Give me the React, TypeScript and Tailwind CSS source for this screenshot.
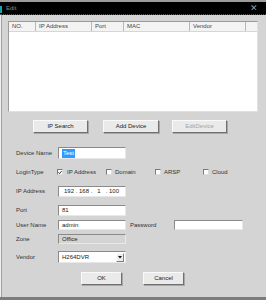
import React from "react";

const font = { fontFamily: '"Liberation Sans", Arial, sans-serif' };

function Btn({ label, w, disabled }: { label: string; w: number; disabled?: boolean }) {
  return (
    <div
      className={`h-[13px] flex items-center justify-center bg-[#eaeaea] border border-t-[#fafafa] border-l-[#fafafa] border-r-[#6f6f6f] border-b-[#6f6f6f] shadow-[1px_1px_0_#a8a8a8] text-[6px] ${disabled ? "text-[#a3a3a3]" : "text-[#222]"}`}
      style={{ width: w }}
    >
      {label}
    </div>
  );
}

function Field({ children, w = 68, h = 11, grey }: { children?: React.ReactNode; w?: number; h?: number; grey?: boolean }) {
  return (
    <div
      className={`flex items-center pl-[3px] border border-t-[#8a8a8a] border-l-[#8a8a8a] border-r-[#e8e8e8] border-b-[#e8e8e8] text-[6px] text-[#222] ${grey ? "bg-[#d4d4d4]" : "bg-white"}`}
      style={{ width: w, height: h }}
    >
      {children}
    </div>
  );
}

function Check({ checked }: { checked?: boolean }) {
  return (
    <div className="w-[6px] h-[6px] bg-white border border-t-[#7a7a7a] border-l-[#7a7a7a] border-r-[#dcdcdc] border-b-[#dcdcdc] flex items-center justify-center">
      {checked && (
        <svg width="5" height="5" viewBox="0 0 5 5">
          <path d="M0.5 2.3 L2 3.8 L4.5 0.8" stroke="#111" strokeWidth="1.1" fill="none" />
        </svg>
      )}
    </div>
  );
}

function Label({ children, w = 42 }: { children: React.ReactNode; w?: number }) {
  return (
    <div className="text-[6px] text-[#333] shrink-0" style={{ width: w }}>
      {children}
    </div>
  );
}

export default function App() {
  const cols = [
    { t: "NO.", w: 27 },
    { t: "IP Address", w: 56 },
    { t: "Port", w: 32 },
    { t: "MAC", w: 66 },
    { t: "Vendor", w: 56 },
  ];
  return (
    <div className="w-[266px] h-[300px] bg-[#d4d4d4] flex flex-col overflow-hidden" style={font}>
      <div className="h-[2px] bg-[#9c9c9c]" />
      <div className="h-[13px] bg-black flex items-center border-b border-dotted border-[#555] relative">
        <div className="w-[2px] h-[7px] bg-[#19a3b0] self-end mb-[1px]" />
        <span className="ml-[4px] text-[6px] text-[#8a8a8a]">Edit</span>
        <span className="ml-auto mr-[8px] text-[9px] leading-none text-[#9a9a9a]">✕</span>
      </div>
      <div className="flex-1 flex border-l border-l-[#efefef]">
        <div className="flex-1 flex flex-col border-l border-l-[#a2a2a2]">
          {/* table */}
          <div className="ml-[6px] mt-[6px] w-[250px] h-[91px] bg-white border border-t-[#9a9a9a] border-l-[#9a9a9a] border-r-[#e0e0e0] border-b-[#e0e0e0] flex flex-col">
            <div className="h-[10px] flex bg-[#f3f3f3] border-b border-[#d6d6d6]">
              {cols.map((c) => (
                <div
                  key={c.t}
                  className="h-full flex items-center pl-[3px] text-[6px] text-[#444] border-r border-[#b8b8b8]"
                  style={{ width: c.w }}
                >
                  {c.t}
                </div>
              ))}
              <div className="flex-1" />
            </div>
          </div>
          {/* buttons */}
          <div className="flex mt-[8px] ml-[31px]">
            <Btn label="IP Search" w={55} />
            <div className="w-[15px]" />
            <Btn label="Add Device" w={56} />
            <div className="w-[13px]" />
            <Btn label="EditDevice" w={55} disabled />
          </div>
          <div className="flex flex-col ml-[14px]">
            <div className="flex items-center mt-[14px] h-[12px]">
              <Label>Device Name</Label>
              <Field h={12}>
                <span className="bg-[#3399ff] text-white px-[1px]">Test</span>
              </Field>
            </div>
            <div className="flex items-center mt-[8px] h-[10px] text-[6px] text-[#333]">
              <Label w={41}>LoginType</Label>
              <Check checked />
              <span className="ml-[4px] w-[39px]">IP Address</span>
              <Check />
              <span className="ml-[3px] w-[40px]">Domain</span>
              <Check />
              <span className="ml-[3px] w-[39px]">ARSP</span>
              <Check />
              <span className="ml-[3px]">Cloud</span>
            </div>
            <div className="flex items-center mt-[9px] h-[11px]">
              <Label>IP Address</Label>
              <Field>
                <span className="ml-[2px] whitespace-pre">192 . 168 .   1   . 100</span>
              </Field>
            </div>
            <div className="flex items-center mt-[8px] h-[11px]">
              <Label>Port</Label>
              <Field>81</Field>
            </div>
            <div className="flex items-center mt-[4px] h-[10px]">
              <Label>User Name</Label>
              <Field h={10}>admin</Field>
              <div className="ml-[4px] w-[44px] text-[6px] text-[#333]">Password</div>
              <Field w={69} h={10} />
            </div>
            <div className="flex items-center mt-[4px] h-[10px]">
              <Label>Zone</Label>
              <Field h={10} grey>
                Office
              </Field>
            </div>
            <div className="flex items-center mt-[7px] h-[12px]">
              <Label>Vendor</Label>
              <div className="w-[68px] h-[12px] flex items-center bg-white border border-t-[#8a8a8a] border-l-[#8a8a8a] border-r-[#e8e8e8] border-b-[#e8e8e8] text-[6px] text-[#222]">
                <span className="pl-[3px] flex-1">H264DVR</span>
                <div className="w-[8px] h-[9px] mr-[1px] bg-[#ececec] border border-t-[#fff] border-l-[#fff] border-r-[#808080] border-b-[#808080] flex items-center justify-center">
                  <svg width="4" height="3" viewBox="0 0 4 3">
                    <path d="M0 0 H4 L2 2.5 Z" fill="#111" />
                  </svg>
                </div>
              </div>
            </div>
          </div>
          <div className="flex mt-[9px] ml-[79px]">
            <Btn label="OK" w={41} />
            <div className="w-[21px]" />
            <Btn label="Cancel" w={41} />
          </div>
        </div>
      </div>
      <div className="h-[3px] bg-[#7c7c7c]" />
    </div>
  );
}
